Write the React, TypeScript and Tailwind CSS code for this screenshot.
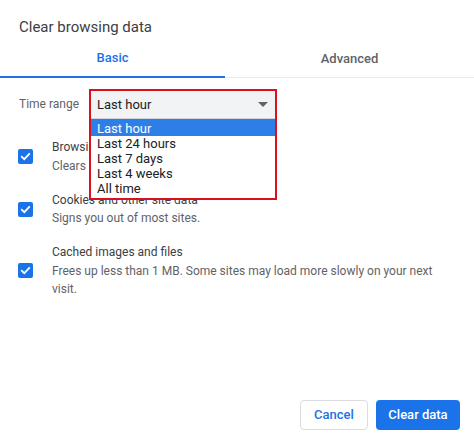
import { useState } from "react";

const RANGES = ["Last hour", "Last 24 hours", "Last 7 days", "Last 4 weeks", "All time"];

const ITEMS = [
  { title: "Browsing history", body: ["Clears history from all synced devices."] },
  { title: "Cookies and other site data", body: ["Signs you out of most sites."] },
  {
    title: "Cached images and files",
    body: ["Frees up less than 1 MB. Some sites may load more slowly on your next", "visit."],
  },
];

function Checkbox() {
  return (
    <span className="flex h-[15px] w-[15px] shrink-0 items-center justify-center rounded-[2px] bg-[#1a73e8]">
      <svg width="11" height="11" viewBox="0 0 12 12" fill="none">
        <path d="M2 6.3 4.7 9 10 3.4" stroke="white" strokeWidth="2" strokeLinecap="square" />
      </svg>
    </span>
  );
}

export default function App() {
  const [range] = useState(RANGES[0]);

  return (
    <div
      className="relative h-[445px] w-[474px] overflow-hidden bg-white text-[#202124]"
      style={{ fontFamily: "Roboto, 'Liberation Sans', sans-serif" }}
    >
      <div className="h-[40px] px-[19px] pt-[18px] text-[15px] leading-[18px] text-[#3c4043]">
        Clear browsing data
      </div>

      <div className="flex h-[38px] text-[13px] font-medium">
        <div className="flex w-[225px] items-center justify-center border-b-2 border-[#1a73e8] text-[#1a73e8]">
          Basic
        </div>
        <div className="flex flex-1 items-end justify-center">
          <div className="flex h-[38px] w-full items-center justify-center border-b border-[#e8eaed] text-[#5f6368]">
            Advanced
          </div>
        </div>
      </div>

      <div className="mt-[11px] flex items-center pl-[19px]">
        <span className="w-[70px] text-[12px] text-[#5f6368]">Time range</span>
        <div className="relative h-[30px] w-[188px]">
          <div className="absolute left-0 top-0 z-10 w-[188px] border-[2.5px] border-[#d8101f] bg-white">
            <div className="flex h-[27px] items-center justify-between bg-[#f1f3f4] pl-[6px] pr-[7px] text-[13px] text-[#202124]">
              <span>{range}</span>
              <svg width="10" height="5" viewBox="0 0 10 5">
                <path d="M0 0h10L5 5z" fill="#5f6368" />
              </svg>
            </div>
            <ul className="border-t border-[#cfd3d7] pb-[2px] text-[13px] leading-[15px]">
              {RANGES.map((r) => (
                <li
                  key={r}
                  className={`pl-[6px] ${r === range ? "bg-[#2e7ee8] pb-[0.5px] pt-[1.5px] text-white" : "text-[#202124]"}`}
                >
                  {r}
                </li>
              ))}
            </ul>
          </div>
        </div>
      </div>

      <div className="mt-[19px] flex flex-col gap-[15.5px] pr-[20px]">
        {ITEMS.map((item) => (
          <div key={item.title} className="flex items-center">
            <div className="flex w-[52px] justify-start pl-[18px]">
              <Checkbox />
            </div>
            <div className="whitespace-nowrap text-[12px] leading-[18.5px]">
              <div className="text-[#3c4043]">{item.title}</div>
              {item.body.map((line) => (
                <div key={line} className="text-[#5f6368]">
                  {line}
                </div>
              ))}
            </div>
          </div>
        ))}
      </div>

      <div className="absolute bottom-[15px] right-[14px] flex gap-[8px] text-[13px] font-medium">
        <button
          type="button"
          className="h-[30px] w-[68px] rounded-[4px] border border-[#dadce0] bg-white text-[#1a73e8]"
        >
          Cancel
        </button>
        <button type="button" className="h-[30px] w-[84px] rounded-[4px] bg-[#1a73e8] text-white">
          Clear data
        </button>
      </div>
    </div>
  );
}
